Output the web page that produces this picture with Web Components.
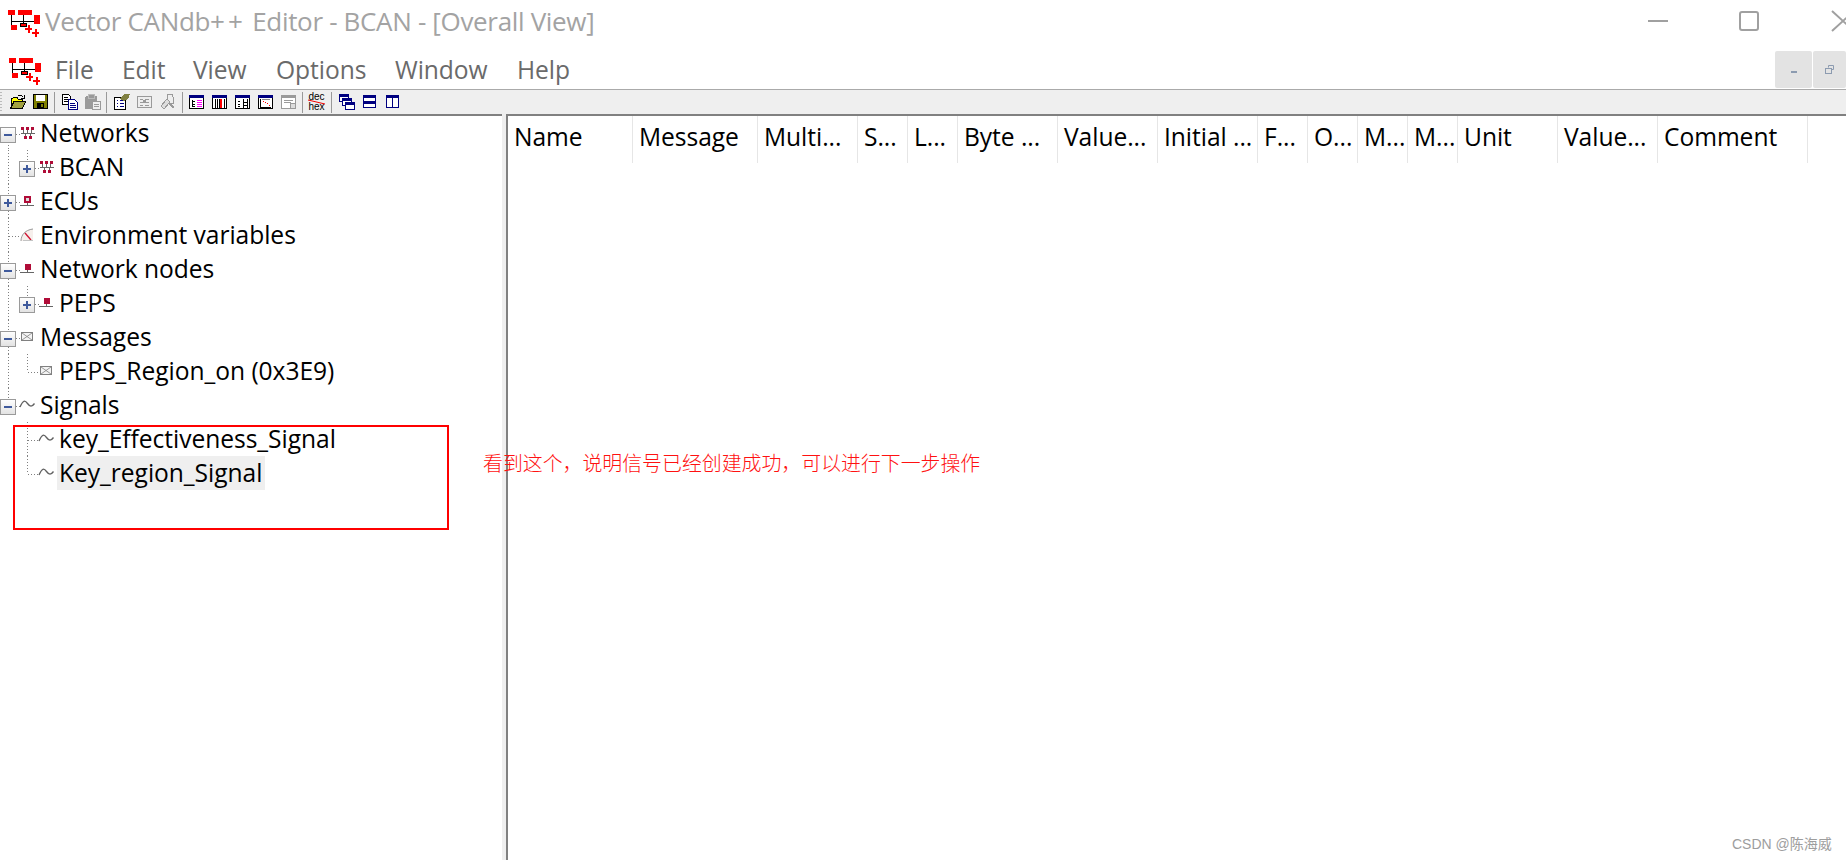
<!DOCTYPE html>
<html lang="zh"><head><meta charset="utf-8"><title>Vector CANdb++ Editor</title>
<style>
html,body{margin:0;padding:0;background:#fff;}
body{width:1846px;height:860px;overflow:hidden;font-family:"Open Sans","Noto Sans CJK SC",sans-serif;}
</style></head><body>
<app-window>
  <title-bar>Vector CANdb<span style="letter-spacing:3px">++</span> Editor - BCAN - [Overall View]</title-bar>
  <menu-bar></menu-bar>
  <tool-bar></tool-bar>
  <split-view>
    <tree-pane slot="left">
      <tree-row exp="minus" icon="net" rail="bottom">Networks</tree-row>
      <tree-row level="1" exp="plus" icon="net" rail="full">BCAN</tree-row>
      <tree-row exp="plus" icon="ecu" rail="full">ECUs</tree-row>
      <tree-row icon="env" rail="full">Environment variables</tree-row>
      <tree-row exp="minus" icon="node" rail="full">Network nodes</tree-row>
      <tree-row level="1" exp="plus" icon="node" rail="full">PEPS</tree-row>
      <tree-row exp="minus" icon="msg" rail="full">Messages</tree-row>
      <tree-row level="1" icon="msg" rail="full">PEPS_Region_on (0x3E9)</tree-row>
      <tree-row exp="minus" icon="sig" rail="top">Signals</tree-row>
      <tree-row level="1" icon="sig" more>key_Effectiveness_Signal</tree-row>
      <tree-row level="1" icon="sig" selected>Key_region_Signal</tree-row>
    </tree-pane>
    <list-header slot="right"></list-header>
  </split-view>
  <note-box></note-box>
  <note-text>看到这个，说明信号已经创建成功，可以进行下一步操作</note-text>
  <water-mark>CSDN @陈海威</water-mark>
</app-window>
<script>
const logo=`<svg width="34" height="30" viewBox="0 0 34 30" shape-rendering="crispEdges">
<path d="M3.5 5V15M3.5 11.5H26M15.5 5V13" stroke="#000" fill="none"/>
<rect x="0" y="0" width="7" height="5" fill="#f00"/><rect x="10" y="0" width="14" height="5" fill="#f00"/>
<rect x="26" y="5" width="6" height="9" fill="#f00"/><rect x="3" y="15" width="6" height="5" fill="#f00"/>
<rect x="12.5" y="13.5" width="6" height="3" fill="#f00" stroke="#000"/>
<path d="M17 19H24M20.5 15V23M24 23H31M27.5 19V27" stroke="#f00" stroke-width="2" fill="none"/></svg>`;
class TitleBar extends HTMLElement{constructor(){super();this.attachShadow({mode:'open'}).innerHTML=`<style>
:host{display:flex;height:47px;flex:none}
.l{margin:0 3px 0 8px;display:flex;align-self:flex-start;padding-top:10px}
.t{font:26px/42px "Open Sans",sans-serif;color:#a3a3a3;white-space:nowrap;letter-spacing:-.33px}
svg.c{margin-left:auto;flex:none}
</style><div class="l">${logo}</div><div class="t"><slot></slot></div>
<svg class="c" width="206" height="47" viewBox="0 0 206 47" fill="none" stroke="#a0a0a0" stroke-width="2">
<path d="M8 21H28"/><rect x="100" y="12" width="18" height="18" rx="2"/><path d="M192 11L214 31M192 31L214 11"/></svg>`}}
customElements.define('title-bar',TitleBar);
class MenuBar extends HTMLElement{constructor(){super();
const items=[['File',67],['Edit',71],['View',83],['Options',119],['Window',122],['Help',62]];
this.attachShadow({mode:'open'}).innerHTML=`<style>
:host{display:flex;height:42px;flex:none;align-items:stretch}
.l{margin:11px 10px 0 9px;width:36px;display:flex}
.m{font:24.6px/45px "Open Sans",sans-serif;color:#6a6a6a;white-space:nowrap;letter-spacing:-.05px}
.b{width:37px;height:37px;margin-top:4px;background:#e3e3e3;border-radius:2px;display:flex;align-items:center;justify-content:center}
.b+.b{margin-left:1px;width:33px}
.r{margin-left:auto;display:flex}
</style><div class="l">${logo}</div>${items.map(i=>`<div class="m" style="width:${i[1]}px">${i[0]}</div>`).join('')}
<div class="r"><div class="b"><svg width="8" height="8"><rect x="1" y="5" width="6" height="2" fill="#8c9bb0"/></svg></div>
<div class="b"><svg width="10" height="10" fill="none" stroke="#8c9bb0"><path d="M3.5 2.5V.5H8.5V4.5H6.5"/><rect x=".5" y="3.5" width="6" height="5"/></svg></div></div>`}}
customElements.define('menu-bar',MenuBar);

const S=(b)=>`<svg width="16" height="16" viewBox="0 0 16 16" shape-rendering="crispEdges" fill="none">${b}</svg>`;
const win2=(inner,band='#000080',edge='#000')=>`<rect x="0" y="1" width="15" height="14" fill="#fff" stroke="none"/><rect x=".5" y="1.5" width="14" height="13" stroke="${edge}"/><rect x="0" y="1" width="15" height="3" fill="${band}"/>${inner}`;
const G='#9a9a9a';
const icons={
open:S(`<path d="M1 4H3L4 3H7L8 5H12V7H4L1 13Z" fill="#ff0" stroke="#000"/><path d="M.5 14.5H12.5L15.5 7.5H4.5L.5 14.5Z" fill="#a0a040" stroke="#000"/><path d="M8 1H11L13 3M14 1V4H11" stroke="#000"/>`),
save:S(`<rect x=".5" y=".5" width="14" height="14" fill="#808000" stroke="#000"/><rect x="3" y="1" width="9" height="6" fill="#fff"/><rect x="4" y="9" width="7" height="5" fill="#000"/><rect x="8" y="10" width="2" height="3" fill="#808000"/>`),
copy:S(`<path d="M.5 .5H6.5L8.5 2.5V10.5H.5Z" fill="#fff" stroke="#000"/><path d="M2 3H6M2 5H7M2 7H7" stroke="#000"/><path d="M6.5 5.5H12.5L15.5 8.5V15.5H6.5Z" fill="#fff" stroke="#000080"/><path d="M8 9H13M8 11H14M8 13H14" stroke="#000080"/>`),
paste:S(`<rect x="0" y="2" width="12" height="13" rx="2" fill="${G}"/><rect x="3" y="0" width="6" height="4" fill="${G}" stroke="#bbb"/><path d="M7.5 7.5H15.5V15.5H7.5Z" fill="#eee" stroke="${G}"/><path d="M9 10H14M9 12H14" stroke="${G}"/>`),
prop:S(`<rect x=".5" y="3.5" width="11" height="12" fill="#fff" stroke="#000"/><path d="M3 6H4M6 6H10M3 9H4M6 9H10M3 12H4M6 12H10" stroke="#000080"/><path d="M6 4L11 0H16L14 5L10 7L6 5Z" fill="#808040"/>`),
propg:S(`<rect x=".5" y="2.5" width="14" height="11" fill="#eee" stroke="${G}"/><path d="M3 5H6M3 8H6M3 11H6M8 5H12M8 8H12M8 11H12" stroke="${G}"/><rect x="6" y="6" width="3" height="3" fill="${G}"/>`),
toolg:S(`<path d="M8 .5L12 .5L13.5 4V9H7Z" fill="#eee" stroke="${G}"/><path d="M7 5L1 12L4 15L10 8Z" fill="#ddd" stroke="${G}"/><path d="M9 9L14 14" stroke="${G}" stroke-width="2"/>`),
t1:S(win2(`<path d="M3 6V12M3 7H6M3 10H6M3 12H6" stroke="#000"/><path d="M8 6H13M8 8H13M8 10H13M8 12H13" stroke="#f0f"/>`)),
t2:S(win2(`<path d="M3 5V14M5 5V14M7 5V14M12 5V14" stroke="#000"/><path d="M9 5V14" stroke="#f00" stroke-width="2"/>`)),
t3:S(win2(`<path d="M3 7H5M3 10H5M3 12H5" stroke="#000"/><path d="M8.5 5V14M12.5 5V14" stroke="#000"/><path d="M9 8H12M9 11H12" stroke="#000"/>`)),
t4:S(win2(`<path d="M2.5 5V13.5H13" stroke="#000"/><path d="M5 7H6M7 8H8M9 9H10M11 11H12" stroke="#f00"/><path d="M4 5H12" stroke="#888"/>`)),
t5:S(win2(`<path d="M3 6H12M3 8H10" stroke="${G}"/><path d="M9 9H14V14H9Z" fill="#ddd" stroke="${G}"/>`,G,G)),
w1:S(`<rect x=".5" y=".5" width="9" height="7" fill="#fff" stroke="#000080"/><rect x="0" y="0" width="10" height="3" fill="#000080"/><rect x="3.5" y="4.5" width="9" height="7" fill="#fff" stroke="#000080"/><rect x="3" y="4" width="10" height="3" fill="#000080"/><rect x="6.5" y="8.5" width="9" height="7" fill="#fff" stroke="#000080"/><rect x="6" y="8" width="10" height="3" fill="#000080"/>`),
w2:S(`<rect x="1.5" y="1.5" width="12" height="12" fill="#fff" stroke="#000080" stroke-width="1"/><rect x="1" y="1" width="13" height="3" fill="#000080"/><rect x="1" y="7" width="13" height="3" fill="#000080"/>`),
w3:S(`<rect x="1.5" y="1.5" width="12" height="12" fill="#fff" stroke="#000080"/><rect x="1" y="1" width="13" height="3" fill="#000080"/><rect x="7" y="1" width="1" height="13" fill="#000080"/>`)
};
class ToolIcon extends HTMLElement{constructor(){super();this.attachShadow({mode:'open'}).innerHTML=`<style>:host{display:flex;width:23px;height:24px;align-items:center;justify-content:center;flex:none}svg{display:block}</style>${icons[this.getAttribute('name')]||''}`}}
customElements.define('tool-icon',ToolIcon);
class ToolSep extends HTMLElement{constructor(){super();this.attachShadow({mode:'open'}).innerHTML=`<style>:host{display:block;flex:none;width:1px;height:21px;background:#999;margin:0 var(--r,3px) 0 var(--l,2px)}</style>`}}
customElements.define('tool-sep',ToolSep);
class DecHex extends HTMLElement{constructor(){super();this.attachShadow({mode:'open'}).innerHTML=`<style>:host{display:block;flex:none;width:23px;height:24px;position:relative;font:10px/10px "Liberation Sans",sans-serif;color:#000;text-align:center;overflow:hidden}
div{padding-top:2px}svg{position:absolute;left:3px;top:9px}</style><div>dec<br>hex</div><svg width="17" height="6"><path d="M0 1L17 5" stroke="#e00" fill="none"/></svg>`}}
customElements.define('dec-hex',DecHex);
class ToolBar extends HTMLElement{constructor(){super();
const g=a=>a.map(n=>`<tool-icon name="${n}"></tool-icon>`).join('');
this.attachShadow({mode:'open'}).innerHTML=`<style>:host{display:flex;flex:none;height:24px;padding-left:6px;align-items:center;background:#efefef;border-top:1px solid #aaa;position:relative}
.g{width:2px;height:20px;position:absolute;left:0;top:2px;background:repeating-linear-gradient(#bbb 0 1px,transparent 1px 3px)}
</style><div class="g"></div>${g(['open','save'])}<tool-sep></tool-sep>${g(['copy','paste'])}<tool-sep style="--l:2px;--r:3px"></tool-sep>${g(['prop','propg','toolg'])}<tool-sep style="--l:3px;--r:2px"></tool-sep>${g(['t1','t2','t3','t4','t5'])}<tool-sep style="--l:2px;--r:2px"></tool-sep><dec-hex></dec-hex><tool-sep style="--l:3px;--r:3px"></tool-sep>${g(['w1','w2','w3'])}`}}
customElements.define('tool-bar',ToolBar);
class SplitView extends HTMLElement{constructor(){super();this.attachShadow({mode:'open'}).innerHTML=`<style>:host{display:flex;flex:1;min-height:0}
.a{width:502px;flex:none;border-top:2px solid #808080;box-sizing:border-box}
.s{width:4px;flex:none;background:#efefef}
.b{flex:1;border-left:2px solid #808080;border-top:2px solid #808080;box-sizing:border-box}
</style><div class="a"><slot name="left"></slot></div><div class="s"></div><div class="b"><slot name="right"></slot></div>`}}
customElements.define('split-view',SplitView);
class TreePane extends HTMLElement{constructor(){super();this.attachShadow({mode:'open'}).innerHTML=`<style>:host{display:block}</style><slot></slot>`}}
customElements.define('tree-pane',TreePane);
const C='#b00c38';
const nodeI={
net:`<g shape-rendering="crispEdges"><path d="M1 8.5H15M3 5V8M7 5V8M11 5V8M5 8V11M10 8V11" stroke="#666" fill="none"/><rect x="1" y="2" width="3" height="3" fill="${C}"/><rect x="6" y="2" width="3" height="3" fill="${C}"/><rect x="11" y="2" width="3" height="3" fill="${C}"/><rect x="3.5" y="11" width="3" height="3" fill="${C}"/><rect x="8.5" y="11" width="3" height="3" fill="${C}"/></g>`,
ecu:`<g shape-rendering="crispEdges"><path d="M0 12.5H14" stroke="#666"/><path d="M7.5 10V12" stroke="#666"/><rect x="4" y="3" width="7" height="7" fill="${C}"/><rect x="6" y="5" width="3" height="3" fill="#ddd"/></g>`,
node:`<g shape-rendering="crispEdges"><path d="M0 11.5H14" stroke="#666"/><path d="M7.5 8V11" stroke="#666"/><rect x="5" y="3" width="6" height="6" fill="${C}"/></g>`,
env:`<path d="M1 14C1 8 5 3 13 2V14Z" fill="#f6efec" stroke="none"/><path d="M1 14C1 8 5 3 13 2" fill="none" stroke="#999"/><path d="M5 6L11 13" stroke="#d01030" stroke-width="1.3"/><path d="M3 13.5H13" stroke="#c4c4c4"/>`,
msg:`<g shape-rendering="crispEdges"><rect x="1.5" y="3.5" width="11" height="8" fill="#f4f4f4" stroke="#808080"/></g><path d="M2 4L12 11M12 4L2 11" stroke="#808080" stroke-width=".8"/>`,
sig:`<path d="M0 10C3 3 5 3 7.5 6.5S12 10 14.5 6.5" fill="none" stroke="#606060" stroke-width="1.3"/>`
};
class TreeRow extends HTMLElement{constructor(){super();
const lv=+(this.getAttribute('level')||0),exp=this.getAttribute('exp'),ic=this.getAttribute('icon'),rail=this.getAttribute('rail'),sel=this.hasAttribute('selected'),more=this.hasAttribute('more');
const w=lv?59:40,bx=lv?19:0,d='stroke="#808080" stroke-dasharray="1 2" shape-rendering="crispEdges" fill="none"';
let g='';
if(rail==='full')g+=`<path d="M8.5 0V34" ${d}/>`;
if(rail==='bottom')g+=`<path d="M8.5 26V34" ${d}/>`;
if(rail==='top')g+=`<path d="M8.5 0V11" ${d}/>`;
const hx=lv?27.5:8.5;
if(lv)g+=`<path d="M27.5 0V${more?34:(exp?11:18)}" ${d}/>`;
if(exp)g+=`<path d="M${bx+16} 18.5H${bx+20}" ${d}/>`;else g+=`<path d="M${hx} 18.5H${lv?38:20}" ${d}/>`;
if(exp)g+=`<g shape-rendering="crispEdges"><rect x="${bx+.5}" y="11.5" width="15" height="15" rx="1" fill="url(#gr)" stroke="#9a9a9a"/><path d="M${bx+4} 19H${bx+12}" stroke="#3f5a9c" stroke-width="2"/>${exp==='plus'?`<path d="M${bx+8} 15V23" stroke="#3f5a9c" stroke-width="2"/>`:''}</g>`;
g+=`<g transform="translate(${lv?39:20} 9)">${nodeI[ic]||''}</g>`;
this.attachShadow({mode:'open'}).innerHTML=`<style>:host{display:flex;height:34px;align-items:stretch}
svg{flex:none;display:block}
.t{font:24.6px/34px "Open Sans",sans-serif;letter-spacing:-.04px;color:#000;white-space:nowrap;padding:0 3px;margin-left:-3px;height:34px}
.s{background:#efefef;margin-left:-2px;padding-left:2px}</style>
<svg width="${w}" height="34" viewBox="0 0 ${w} 34"><defs><linearGradient id="gr" x1="0" y1="0" x2="0" y2="1"><stop offset="0" stop-color="#fff"/><stop offset="1" stop-color="#e2e2e2"/></linearGradient></defs>${g}</svg>
<div class="t ${sel?'s':''}"><slot></slot></div>`}}
customElements.define('tree-row',TreeRow);
class HeadCell extends HTMLElement{constructor(){super();this.attachShadow({mode:'open'}).innerHTML=`<style>:host{display:block;box-sizing:border-box;flex:none;height:47px;padding-left:6px;border-right:1px solid #e6e6e6;overflow:hidden;width:var(--w);font:24.6px/41px "Open Sans",sans-serif;letter-spacing:-.05px;white-space:nowrap;color:#000}</style><slot></slot>`}}
customElements.define('head-cell',HeadCell);
class ListHeader extends HTMLElement{constructor(){super();
const c=[['Name',125],['Message',125],['Multi...',100],['S...',50],['L...',50],['Byte ...',100],['Value...',100],['Initial ...',100],['F...',50],['O...',50],['M...',50],['M...',50],['Unit',100],['Value...',100],['Comment',150]];
this.attachShadow({mode:'open'}).innerHTML=`<style>:host{display:flex}</style>`+c.map(x=>`<head-cell style="--w:${x[1]}px">${x[0]}</head-cell>`).join('')}}
customElements.define('list-header',ListHeader);
class NoteBox extends HTMLElement{constructor(){super();this.attachShadow({mode:'open'}).innerHTML=`<style>:host{position:absolute;left:13px;top:425px;width:436px;height:105px;box-sizing:border-box;border:2px solid #f00}</style>`}}
customElements.define('note-box',NoteBox);
class NoteText extends HTMLElement{constructor(){super();this.attachShadow({mode:'open'}).innerHTML=`<style>:host{position:absolute;left:483px;top:451px;font:300 19.9px/24px "Noto Sans CJK SC",sans-serif;color:#f11;white-space:nowrap}</style><slot></slot>`}}
customElements.define('note-text',NoteText);
class WaterMark extends HTMLElement{constructor(){super();this.attachShadow({mode:'open'}).innerHTML=`<style>:host{position:absolute;left:1732px;top:835px;font:14px/18px "Liberation Sans","Noto Sans CJK SC",sans-serif;color:#9d9d9d;white-space:nowrap}</style><slot></slot>`}}
customElements.define('water-mark',WaterMark);
class AppWindow extends HTMLElement{constructor(){super();this.attachShadow({mode:'open'}).innerHTML=`<style>:host{display:flex;flex-direction:column;width:1846px;height:860px;position:relative;overflow:hidden;background:#fff}</style><slot></slot>`}}
customElements.define('app-window',AppWindow);
</script>
</body></html>
